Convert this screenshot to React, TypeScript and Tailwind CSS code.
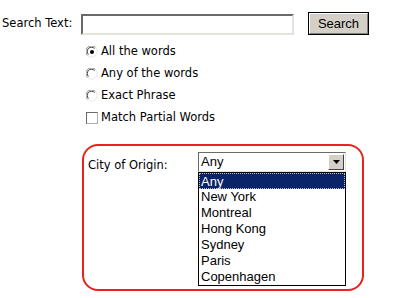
import React from "react";

function Radio({ checked }: { checked?: boolean }) {
    return (
        <svg width="12" height="12" viewBox="0 0 12 12" className="shrink-0">
            <circle cx="6" cy="6" r="5.5" fill="#ffffff" />
            <path d="M1.5 9.5 A5.5 5.5 0 0 1 9.5 1.5" fill="none" stroke="#808080" strokeWidth="1" />
            <path d="M2.5 8.5 A4.2 4.2 0 0 1 8.5 2.5" fill="none" stroke="#404040" strokeWidth="1" />
            <path d="M9.5 1.5 A5.5 5.5 0 0 1 1.5 9.5" fill="none" stroke="#e8e8e8" strokeWidth="1" />
            {checked && <circle cx="6" cy="6" r="2" fill="#000000" />}
        </svg>
    )
}

const cities = ["Any", "New York", "Montreal", "Hong Kong", "Sydney", "Paris", "Copenhagen"];

export default function App() {
    return (
        <div className="w-[401px] h-[298px] bg-white pt-[12px] pl-[2px] text-black text-[11.5px] font-['DejaVu_Sans',Verdana,sans-serif]">

            <div className="flex items-center h-[23px]">
                <span className="w-[79px]">Search Text:</span>
                <div className="w-[213px] h-[21px] mt-[2px] border-2 border-t-[#6a6a6a] border-l-[#6a6a6a] border-b-[#e4e2dc] border-r-[#e4e2dc] bg-white"></div>
                <button className="ml-[14px] w-[61px] h-[23px] border border-black bg-[#d4d0c8] p-0">
                    <div className="w-full h-full border border-t-white border-l-white border-b-[#808080] border-r-[#808080] flex items-center justify-center text-[13px] font-['Liberation_Sans',Arial,sans-serif]">
                        Search
                    </div>
                </button>
            </div>

            <div className="ml-[84px] mt-[6px] flex flex-col">
                <label className="flex items-center gap-[3px] h-[22px]">
                    <Radio checked />
                    <span>All the words</span>
                </label>
                <label className="flex items-center gap-[3px] h-[22px]">
                    <Radio />
                    <span>Any of the words</span>
                </label>
                <label className="flex items-center gap-[3px] h-[22px]">
                    <Radio />
                    <span>Exact Phrase</span>
                </label>
                <label className="flex items-center gap-[3px] h-[22px]">
                    <div className="w-[12px] h-[12px] shrink-0 border border-t-[#6a6a6a] border-l-[#6a6a6a] border-b-[#b0b0b0] border-r-[#b0b0b0] bg-white"></div>
                    <span>Match Partial Words</span>
                </label>
            </div>

            <div className="ml-[80px] mt-[15px] w-[282px] h-[147px] border-2 border-[#e8231b] rounded-[16px] pt-[6px] pl-[4px] flex">
                <span className="w-[110px] pt-[5px]">City of Origin:</span>
                <div className="flex flex-col w-[148px] font-['Liberation_Sans',Arial,sans-serif] text-[13px]">
                    <div className="h-[20px] flex items-center border border-t-[#6a6a6a] border-l-[#6a6a6a] border-b-[#e4e2dc] border-r-[#e4e2dc] bg-white">
                        <span className="flex-1 pl-[2px]">Any</span>
                        <div className="w-[16px] h-[16px] mr-[1px] bg-[#d4d0c8] border border-t-white border-l-white border-b-[#404040] border-r-[#404040] flex items-center justify-center">
                            <svg width="7" height="4" viewBox="0 0 7 4"><path d="M0 0 H7 L3.5 4 Z" fill="#000" /></svg>
                        </div>
                    </div>
                    <div className="border border-black bg-white">
                        {cities.map((c, i) => (
                            <div
                                key={c}
                                className={i === 0
                                    ? "h-[16px] leading-[16px] pl-[1px] bg-[#0a246a] text-white border border-dotted border-[#c0c0c0]"
                                    : "h-[16px] leading-[16px] pl-[2px]"}
                            >
                                {c}
                            </div>
                        ))}
                    </div>
                </div>
            </div>

        </div>
    )
}
